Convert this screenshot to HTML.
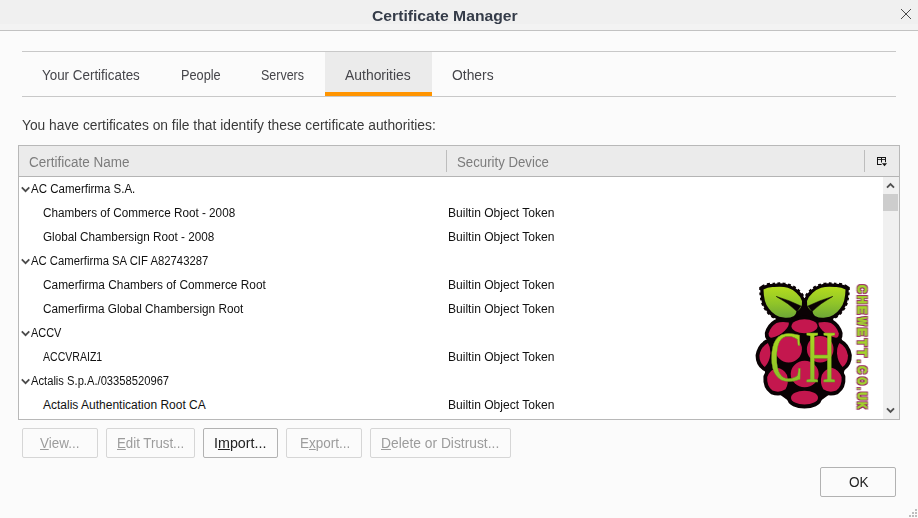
<!DOCTYPE html>
<html><head><meta charset="utf-8"><title>Certificate Manager</title>
<style>
html,body{margin:0;padding:0;}
body{width:918px;height:518px;overflow:hidden;background:#fbfbfb;position:relative;font-family:"Liberation Sans",sans-serif;color:#1a1a1a;}
.abs{position:absolute;white-space:nowrap;}
#titlebar{left:0;top:0;width:918px;height:30px;background:#f0f0f0;border-bottom:1px solid #c2c2c2;}
#title{left:372px;top:7px;font-size:15px;font-weight:bold;color:#353c49;line-height:18px;}
.hl{background:#c8c8c8;height:1px;}
.tab{font-size:14px;color:#45454a;line-height:18px;top:66px;}
.row{font-size:12px;color:#111;line-height:16px;}
.hdr{top:153px;font-size:14px;color:#7c7c7c;line-height:18px;}
.btn{box-sizing:border-box;border:1px solid #d6d6d6;border-radius:2px;background:#fbfbfb;height:30px;top:428px;}
.btn.on{border-color:#b2b2b2;}
.bt{font-size:14px;color:#9c9c9c;line-height:18px;top:434px;}
.bt.on{color:#222;}
u{text-decoration:underline;text-underline-offset:1px;}
</style></head><body>
<div id="titlebar" class="abs"></div>
<div class="abs" style="left:0;top:24px;width:918px;height:6px;background:#f3f3f3"></div>
<div id="title" class="abs" style="transform:scaleX(1.0460);transform-origin:0 0;">Certificate Manager</div>
<svg class="abs" style="left:900px;top:8px" width="12" height="12" viewBox="0 0 12 12"><path d="M1 1 L11 11 M11 1 L1 11" stroke="#4a4a4a" stroke-width="1" fill="none"/></svg>

<div class="abs hl" style="left:22px;top:51px;width:874px"></div>
<div class="abs" style="left:325px;top:52px;width:107px;height:40px;background:#ebebeb"></div>
<div class="abs" style="left:325px;top:92px;width:107px;height:4px;background:#ff9400"></div>
<div class="abs hl" style="left:22px;top:96px;width:874px"></div>
<div class="abs tab" id="tab1" style="left:42px;transform:scaleX(0.9569);transform-origin:0 0;">Your Certificates</div>
<div class="abs tab" id="tab2" style="left:181px;transform:scaleX(0.9107);transform-origin:0 0;">People</div>
<div class="abs tab" id="tab3" style="left:261px;transform:scaleX(0.8918);transform-origin:0 0;">Servers</div>
<div class="abs tab" id="tab4" style="left:345px;transform:scaleX(0.9941);transform-origin:0 0;">Authorities</div>
<div class="abs tab" id="tab5" style="left:452px;transform:scaleX(0.9905);transform-origin:0 0;">Others</div>

<div class="abs" id="desc" style="left:22px;top:116px;font-size:14px;color:#3a3a3a;line-height:18px;transform:scaleX(0.9857);transform-origin:0 0;">You have certificates on file that identify these certificate authorities:</div>

<div class="abs" id="tree" style="left:18px;top:145px;width:880px;height:273px;border:1px solid #b8b8b8;background:#fff;box-sizing:content-box"></div>
<div class="abs" style="left:19px;top:146px;width:880px;height:30px;background:#ebebeb;border-bottom:1px solid #b4b4b4"></div>
<div class="abs" style="left:446px;top:150px;width:1px;height:22px;background:#bdbdbd"></div>
<div class="abs" style="left:864px;top:150px;width:1px;height:22px;background:#bdbdbd"></div>
<div class="abs hdr" id="hdr1" style="left:29px;transform:scaleX(0.9635);transform-origin:0 0;">Certificate Name</div>
<div class="abs hdr" id="hdr2" style="left:457px;transform:scaleX(0.9443);transform-origin:0 0;">Security Device</div>
<!-- column picker -->
<svg class="abs" style="left:877px;top:157px" width="11" height="10" viewBox="0 0 11 10" fill="#151515"><rect x="0" y="0" width="9" height="1"/><rect x="0" y="0" width="1" height="8"/><rect x="8" y="0" width="1" height="5.2"/><rect x="0" y="2" width="9" height="1" opacity="0.85"/><rect x="4" y="0" width="1" height="5.5"/><rect x="0" y="7" width="4.6" height="1"/><path d="M4.9 6.2 H10.1 L7.5 9.2 Z"/></svg>
<!-- scrollbar -->
<div class="abs" style="left:883px;top:177px;width:16px;height:242px;background:#f0f0f0"></div>
<div class="abs" style="left:883px;top:194px;width:15px;height:17px;background:#cdcdcd"></div>
<svg class="abs" style="left:886px;top:182px" width="9" height="7" viewBox="0 0 9 7"><path d="M1 5.6 L4.5 2 L8 5.6" stroke="#505050" stroke-width="1.9" fill="none"/></svg>
<svg class="abs" style="left:886px;top:407px" width="9" height="7" viewBox="0 0 9 7"><path d="M1 1.4 L4.5 5 L8 1.4" stroke="#505050" stroke-width="1.9" fill="none"/></svg>

<div id="rows">
<svg class="abs" style="left:21px;top:186px" width="10" height="8" viewBox="0 0 10 8"><path d="M0.8 1.3 L4.55 5.2 L8.3 1.3" stroke="#4a4a4a" stroke-width="1.7" fill="none"/></svg>
<div class="abs row" id="r0" style="left:31px;top:181px;transform:scaleX(0.9593);transform-origin:0 0;">AC Camerfirma S.A.</div>
<div class="abs row" id="r1" style="left:43px;top:205px;transform:scaleX(0.9767);transform-origin:0 0;">Chambers of Commerce Root - 2008</div>
<div class="abs row" id="d1" style="left:448px;top:205px;transform:scaleX(1.0057);transform-origin:0 0;">Builtin Object Token</div>
<div class="abs row" id="r2" style="left:43px;top:229px;transform:scaleX(0.9762);transform-origin:0 0;">Global Chambersign Root - 2008</div>
<div class="abs row" id="d2" style="left:448px;top:229px;transform:scaleX(1.0057);transform-origin:0 0;">Builtin Object Token</div>
<svg class="abs" style="left:21px;top:258px" width="10" height="8" viewBox="0 0 10 8"><path d="M0.8 1.3 L4.55 5.2 L8.3 1.3" stroke="#4a4a4a" stroke-width="1.7" fill="none"/></svg>
<div class="abs row" id="r3" style="left:31px;top:253px;transform:scaleX(0.9426);transform-origin:0 0;">AC Camerfirma SA CIF A82743287</div>
<div class="abs row" id="r4" style="left:43px;top:277px;transform:scaleX(0.9885);transform-origin:0 0;">Camerfirma Chambers of Commerce Root</div>
<div class="abs row" id="d4" style="left:448px;top:277px;transform:scaleX(1.0057);transform-origin:0 0;">Builtin Object Token</div>
<div class="abs row" id="r5" style="left:43px;top:301px;transform:scaleX(0.9815);transform-origin:0 0;">Camerfirma Global Chambersign Root</div>
<div class="abs row" id="d5" style="left:448px;top:301px;transform:scaleX(1.0057);transform-origin:0 0;">Builtin Object Token</div>
<svg class="abs" style="left:21px;top:330px" width="10" height="8" viewBox="0 0 10 8"><path d="M0.8 1.3 L4.55 5.2 L8.3 1.3" stroke="#4a4a4a" stroke-width="1.7" fill="none"/></svg>
<div class="abs row" id="r6" style="left:31px;top:325px;transform:scaleX(0.9120);transform-origin:0 0;">ACCV</div>
<div class="abs row" id="r7" style="left:43px;top:349px;transform:scaleX(0.8794);transform-origin:0 0;">ACCVRAIZ1</div>
<div class="abs row" id="d7" style="left:448px;top:349px;transform:scaleX(1.0057);transform-origin:0 0;">Builtin Object Token</div>
<svg class="abs" style="left:21px;top:378px" width="10" height="8" viewBox="0 0 10 8"><path d="M0.8 1.3 L4.55 5.2 L8.3 1.3" stroke="#4a4a4a" stroke-width="1.7" fill="none"/></svg>
<div class="abs row" id="r8" style="left:31px;top:373px;transform:scaleX(0.9324);transform-origin:0 0;">Actalis S.p.A./03358520967</div>
<div class="abs row" id="r9" style="left:43px;top:397px;">Actalis Authentication Root CA</div>
<div class="abs row" id="d9" style="left:448px;top:397px;transform:scaleX(1.0057);transform-origin:0 0;">Builtin Object Token</div>
</div>
<!--LOGO-->
<svg class="abs" style="left:750px;top:275px" width="140" height="145" viewBox="750 275 140 145">
<defs>
<linearGradient id="lg" x1="0" y1="0" x2="0" y2="1"><stop offset="0" stop-color="#b4dc1e"/><stop offset="0.55" stop-color="#8fc429"/><stop offset="1" stop-color="#6ea636"/></linearGradient>
<linearGradient id="tg" x1="0" y1="0" x2="0" y2="1"><stop offset="0" stop-color="#b6e01c"/><stop offset="1" stop-color="#7fb82e"/></linearGradient>
<path id="leafL" d="M763.5 289.5 Q768 286.5 774.3 287 Q782 286 787.8 287.8 Q793 289.5 796.5 293 Q800.5 296.5 802 301 Q802.5 305 800.5 308 Q799 310.5 796.5 311.5 Q796 314.5 794 316 Q789 318.5 783.8 317.6 Q779 317 775.7 314.9 Q771.5 312.5 769 308.8 Q766 305 764.9 300.7 Q763.5 295 763.5 289.5 Z"/>
<g id="redA">
<path d="M788.8 322.6 Q782 321.2 776.5 323 Q770.5 326.5 768.6 333.5 Q768.4 337.5 771.5 337.8 Q779 336.5 785 330.5 Q789.5 326 788.8 322.6 Z"/>
<path d="M767.9 343 Q761 346.5 759.4 355.5 Q759.3 363 764.8 367 Q769.6 362 770.4 353.5 Q770.6 347 767.9 343 Z"/>
</g>
<g id="redB">
<circle cx="788.6" cy="349.2" r="13.3"/>
<path d="M777 367.8 Q770 369.8 767.2 377 Q766.5 386 772.5 390.6 Q779.5 393.3 785.5 389.3 Q789.3 383 787 375 Q783.5 368.5 777 367.8 Z"/>
</g>
<filter id="ol" x="-5%" y="-60%" width="110%" height="220%"><feMorphology in="SourceAlpha" operator="dilate" radius="0.8" result="d"/><feFlood flood-color="#921b52"/><feComposite in2="d" operator="in" result="o"/><feMerge><feMergeNode in="o"/><feMergeNode in="SourceGraphic"/></feMerge></filter>
</defs>
<!-- black silhouette -->
<g fill="#0a0204" stroke="#0a0204" stroke-linejoin="round">
<use href="#leafL" stroke-width="6.6"/>
<use href="#leafL" stroke-width="6.6" transform="translate(1609 0) scale(-1 1)"/>
<use href="#leafL" stroke-width="8.6" stroke-dasharray="2.6 2.2" stroke-linejoin="miter" fill="none"/>
<use href="#leafL" stroke-width="8.6" stroke-dasharray="2.6 2.2" stroke-linejoin="miter" fill="none" transform="translate(1609 0) scale(-1 1)"/>
<path d="M798 300 L804.5 306 L811 300 L813 322 L796 322 Z" stroke-width="2"/>
<use href="#redA" stroke-width="7.6"/>
<use href="#redB" stroke-width="7.6"/>
<use href="#redA" stroke-width="7.6" transform="translate(1607.4 0) scale(-1 1)"/>
<use href="#redB" stroke-width="7.6" transform="translate(1608.8 0) scale(-1 1)"/>
<ellipse cx="804.5" cy="326.2" rx="13" ry="7" stroke-width="7"/>
<ellipse cx="804.5" cy="397.7" rx="13.5" ry="6.9" stroke-width="8"/>
<path d="M772 330 L790 321 L819 321 L837 330 L843 345 L846 360 L841 380 L831 392 L816 403 L793 403 L778 392 L768 380 L763 360 L766 345 Z" stroke-width="2"/>
</g>
<!-- leaves -->
<use href="#leafL" fill="url(#lg)"/>
<use href="#leafL" fill="url(#lg)" transform="translate(1609 0) scale(-1 1)"/>
<path d="M776.2 296.4 Q790 300.5 801 306 L797 311.5 Q789 303.5 776.2 296.4 Z M832.8 296.4 Q819 300.5 808 306 L812 311.5 Q820 303.5 832.8 296.4 Z" fill="#0a0204" stroke="#0a0204" stroke-width="0.5"/>
<!-- drupelets -->
<g fill="#c4174e">
<use href="#redA"/>
<use href="#redB"/>
<use href="#redA" transform="translate(1607.4 0) scale(-1 1)"/>
<use href="#redB" transform="translate(1608.8 0) scale(-1 1)"/>
<ellipse cx="804.5" cy="326.2" rx="13" ry="7"/>
<ellipse cx="804.7" cy="374" rx="14" ry="13.2"/>
<ellipse cx="804.5" cy="397.7" rx="13.5" ry="6.9"/>
</g>
<!-- monogram -->
<text font-family="'Liberation Serif',serif" fill="url(#tg)" stroke="#6a9a20" stroke-width="0.5" lengthAdjust="spacingAndGlyphs"><tspan x="769.4" y="380.6" font-size="71" textLength="33.5" lengthAdjust="spacingAndGlyphs">C</tspan><tspan x="805.6" y="382.4" font-size="75" textLength="30.6" lengthAdjust="spacingAndGlyphs">H</tspan></text>
<!-- site name -->
<text transform="translate(857.7 0) rotate(90)" y="0" font-family="'Liberation Sans',sans-serif" font-weight="bold" font-size="13.6" fill="#a4d42a" stroke="#a4d42a" stroke-width="0.5" stroke-linejoin="miter" filter="url(#ol)"><tspan x="284.71" textLength="8.61" lengthAdjust="spacingAndGlyphs">C</tspan><tspan x="295.54" textLength="8.34" lengthAdjust="spacingAndGlyphs">H</tspan><tspan x="305.77" textLength="8.43" lengthAdjust="spacingAndGlyphs">E</tspan><tspan x="316.99" textLength="8.42" lengthAdjust="spacingAndGlyphs">W</tspan><tspan x="328.00" textLength="8.07" lengthAdjust="spacingAndGlyphs">E</tspan><tspan x="338.88" textLength="6.94" lengthAdjust="spacingAndGlyphs">T</tspan><tspan x="348.76" textLength="7.97" lengthAdjust="spacingAndGlyphs">T</tspan><tspan x="360.23" textLength="2.35" lengthAdjust="spacingAndGlyphs">.</tspan><tspan x="366.06" textLength="7.73" lengthAdjust="spacingAndGlyphs">C</tspan><tspan x="377.20" textLength="7.50" lengthAdjust="spacingAndGlyphs">O</tspan><tspan x="388.07" textLength="1.37" lengthAdjust="spacingAndGlyphs">.</tspan><tspan x="392.16" textLength="7.68" lengthAdjust="spacingAndGlyphs">U</tspan><tspan x="402.09" textLength="6.70" lengthAdjust="spacingAndGlyphs">K</tspan></text>
</svg>
<!--/LOGO-->
<div class="abs btn" style="left:22px;width:76px"></div>
<div class="abs btn" style="left:106px;width:89px"></div>
<div class="abs btn on" style="left:203px;width:75px"></div>
<div class="abs btn" style="left:286px;width:76px"></div>
<div class="abs btn" style="left:370px;width:141px"></div>
<div class="abs btn on" style="left:820px;top:467px;width:76px"></div>
<div class="abs bt" id="b1" style="left:40px;transform:scaleX(0.9601);transform-origin:0 0;"><u>V</u>iew...</div>
<div class="abs bt" id="b2" style="left:117px;transform:scaleX(0.9486);transform-origin:0 0;"><u>E</u>dit Trust...</div>
<div class="abs bt on" id="b3" style="left:214px;transform:scaleX(1.0201);transform-origin:0 0;">I<u>m</u>port...</div>
<div class="abs bt" id="b4" style="left:300px;transform:scaleX(0.9640);transform-origin:0 0;">E<u>x</u>port...</div>
<div class="abs bt" id="b5" style="left:381px;transform:scaleX(0.9866);transform-origin:0 0;"><u>D</u>elete or Distrust...</div>
<div class="abs bt on" id="b6" style="left:849px;top:473px;transform:scaleX(0.9700);transform-origin:0 0;">OK</div>
<!-- resize grip -->
<svg class="abs" style="left:906px;top:506px" width="12" height="12" viewBox="0 0 12 12" fill="#bdbdbd"><rect x="9" y="3" width="2" height="2"/><rect x="6" y="6" width="2" height="2"/><rect x="9" y="6" width="2" height="2"/><rect x="3" y="9" width="2" height="2"/><rect x="6" y="9" width="2" height="2"/><rect x="9" y="9" width="2" height="2"/></svg>
</body></html>
